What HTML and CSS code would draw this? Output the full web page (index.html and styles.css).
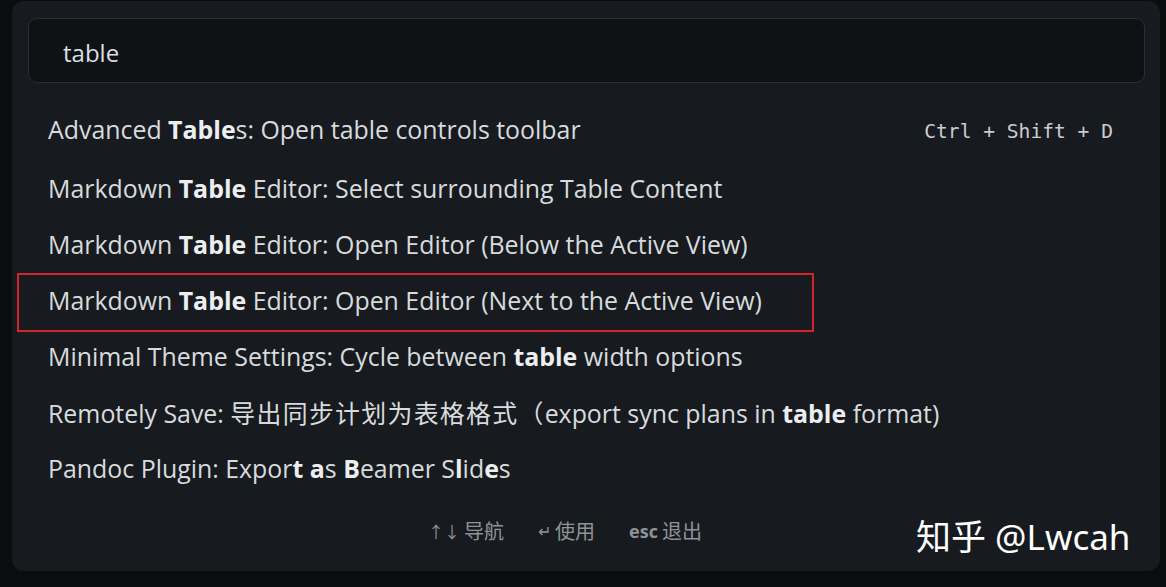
FILE: index.html
```html
<!DOCTYPE html>
<html lang="zh">
<head>
<meta charset="utf-8">
<link rel="stylesheet" href="styles.css">
</head>
<body>
<div class="modal">
  <div class="search">table</div>
  <div class="list">
    <div class="item first"><span class="label">Advanced <b>Table</b>s: Open table controls toolbar</span><span class="kbd">Ctrl + Shift + D</span></div>
    <div class="item"><span class="label">Markdown <b>Table</b> Editor: Select surrounding Table Content</span></div>
    <div class="item"><span class="label">Markdown <b>Table</b> Editor: Open Editor (Below the Active View)</span></div>
    <div class="item"><span class="label">Markdown <b>Table</b> Editor: Open Editor (Next to the Active View)</span></div>
    <div class="item"><span class="label">Minimal Theme Settings: Cycle between <b>table</b> width options</span></div>
    <div class="item"><span class="label">Remotely Save: <span class="cjk">导出同步计划为表格格式（</span>export sync plans in <b>table</b> format)</span></div>
    <div class="item"><span class="label">Pandoc Plugin: Expor<b>t</b> <b>a</b>s <b>B</b>eamer S<b>l</b>id<b>e</b>s</span></div>
  </div>
  <div class="footer">
    <span class="hint"><span class="key">↑↓</span> 导航</span>
    <span class="hint"><span class="key enter">↵</span> 使用</span>
    <span class="hint"><span class="key esc">esc</span> 退出</span>
  </div>
  <div class="annot"></div>
  <div class="watermark">知乎 @Lwcah</div>
</div>
</body>
</html>
```
FILE: styles.css
```css
html, body {
  margin: 0;
  padding: 0;
  background: #0b0c0e;
}
body {
  width: 1166px;
  height: 587px;
  overflow: hidden;
  padding-top: 1px;
  box-sizing: border-box;
  font-family: "Open Sans", "Noto Sans CJK SC", sans-serif;
}
.modal {
  position: relative;
  margin-left: 12px;
  width: 1148px;
  height: 570px;
  background: #171b1f;
  border-radius: 12px;
  box-sizing: border-box;
  padding-top: 17px;
  display: flex;
  flex-direction: column;
}
.search {
  margin: 0 15px 0 16px;
  height: 65px;
  box-sizing: border-box;
  border: 1px solid #2a2f34;
  border-radius: 9px;
  background: #0f1215;
  color: #dcdfe2;
  font-size: 24px;
  display: flex;
  align-items: center;
  padding: 3px 0 0 34px;
}
.list {
  padding-top: 18px;
  display: flex;
  flex-direction: column;
}
.item {
  height: 56px;
  display: flex;
  align-items: center;
  justify-content: space-between;
  padding: 0 47px 0 36px;
  color: #d8dbde;
  font-size: 24.9px;
  white-space: nowrap;
}
.item.first {
  height: 59px;
  padding-bottom: 3px;
  box-sizing: border-box;
}
.item b {
  font-weight: 700;
  color: #eceef0;
}
.cjk {
  letter-spacing: 1.3px;
}
.kbd {
  font-family: "DejaVu Sans Mono", monospace;
  font-size: 19.6px;
  color: #c9cdd1;
  padding-top: 4px;
}
.footer {
  display: flex;
  justify-content: center;
  gap: 34px;
  margin-top: 20px;
  color: #8f9397;
  font-size: 20px;
  padding-right: 42px;
}
.hint {
  display: flex;
  align-items: center;
  gap: 4px;
}
.key {
  font-size: 16px;
}
.key.esc {
  font-weight: 700;
  font-size: 18px;
}
.annot {
  position: absolute;
  left: 5px;
  top: 272px;
  width: 797px;
  height: 59px;
  box-sizing: border-box;
  border: 2px solid #d3232c;
}
.watermark {
  position: absolute;
  left: 904px;
  top: 508px;
  color: #ffffff;
  font-size: 35px;
  font-family: "Noto Sans", "Noto Sans CJK SC", sans-serif;
  white-space: nowrap;
}
```
